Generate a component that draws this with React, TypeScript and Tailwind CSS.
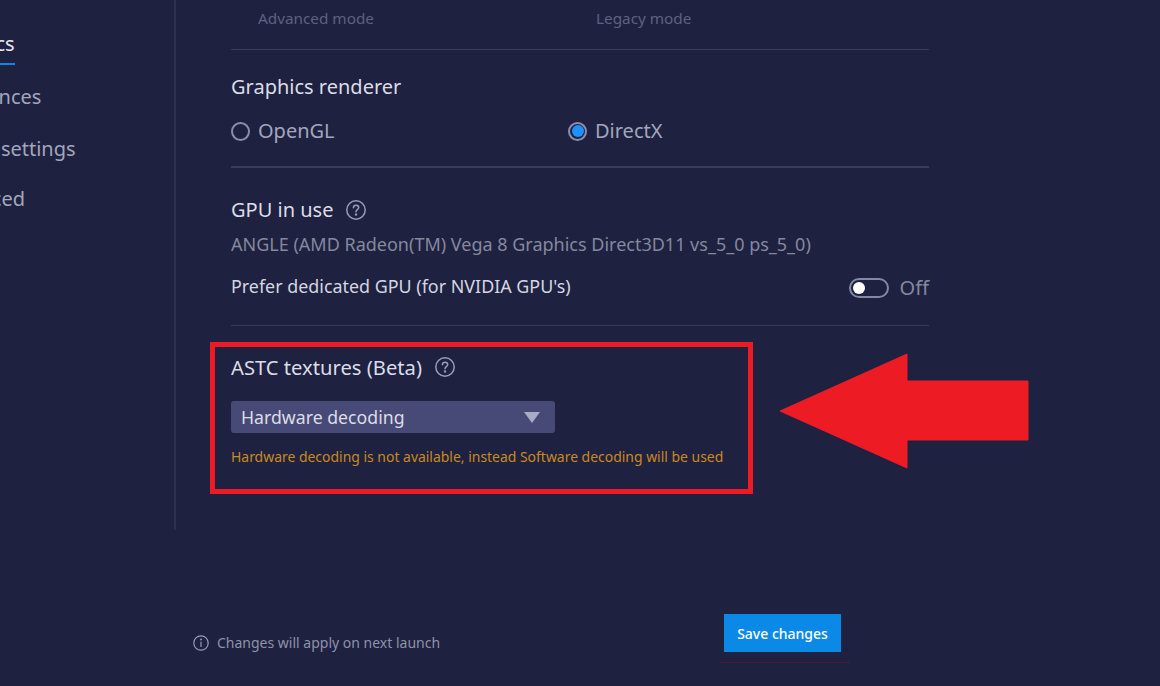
const font = { fontFamily: '"Noto Sans", "Open Sans", sans-serif' };

function HelpIcon() {
  return (
    <svg width="22" height="22" viewBox="0 0 22 22" fill="none" stroke="#9a9db5" strokeWidth="1.5" strokeLinecap="round">
      <circle cx="11" cy="11" r="9.2" />
      <path d="M8.4 8.8c0-1.6 1.2-2.6 2.7-2.6s2.6 1 2.6 2.3c0 2-2.7 2.1-2.7 4.2" />
      <circle cx="11" cy="15.6" r="0.5" fill="#9a9db5" />
    </svg>
  );
}

function Radio({ label, checked }: { label: string; checked?: boolean }) {
  return (
    <div className="flex items-center gap-[8px]">
      <span className="flex h-[19px] w-[19px] items-center justify-center rounded-full border-2 border-[#8c8fa9]">
        {checked && <span className="h-[12px] w-[12px] rounded-full bg-[#1e90ff]" />}
      </span>
      <span className="text-[20px] leading-[24px] text-[#a3a6bd]">{label}</span>
    </div>
  );
}

export default function App() {
  return (
    <div className="relative flex h-[686px] w-[1160px] flex-col overflow-hidden bg-[#1e2140]" style={font}>
      <div className="flex h-[530px]">
        <nav className="flex w-[176px] shrink-0 flex-col overflow-hidden border-r-2 border-[#2c3052] pt-[31px] text-[20px] leading-[26px] text-[#a3a6bd]">
          <div className="ml-[-68px] w-max border-b-2 border-[#0a8ae6] pb-[6px] text-[#e8e9f0]">Graphics</div>
          <div className="ml-[-70px] mt-[19px] whitespace-nowrap">Preferences</div>
          <div className="ml-[-66px] mt-[26px] whitespace-nowrap">Device settings</div>
          <div className="ml-[-67px] mt-[24px] whitespace-nowrap">Advanced</div>
        </nav>

        <main className="ml-[55px] w-[698px]">
          <div className="flex h-[50px] border-b border-[#383b5a] pb-[20px] pl-[27px] pt-[8px] text-[15.3px] leading-[20px] text-[#5f627f]">
            <span className="w-[338px]">Advanced mode</span>
            <span>Legacy mode</span>
          </div>

          <section className="h-[118px] border-b-2 border-[#383b5a] pt-[24px]">
            <h3 className="text-[20px] leading-[26px] text-[#dcdde6]">Graphics renderer</h3>
            <div className="mt-[19px] flex">
              <div className="w-[337px]">
                <Radio label="OpenGL" />
              </div>
              <Radio label="DirectX" checked />
            </div>
          </section>

          <section className="h-[158px] border-b border-[#383b5a] pt-[29px]">
            <div className="flex items-center gap-[12px]">
              <h3 className="text-[20px] leading-[26px] text-[#dcdde6]">GPU in use</h3>
              <HelpIcon />
            </div>
            <p className="mt-[9px] whitespace-nowrap text-[18px] leading-[24px] text-[#85889f]">
              ANGLE (AMD Radeon(TM) Vega 8 Graphics Direct3D11 vs_5_0 ps_5_0)
            </p>
            <div className="mt-[18px] flex items-start justify-between">
              <span className="text-[17.9px] leading-[24px] text-[#d5d6e0]">Prefer dedicated GPU (for NVIDIA GPU's)</span>
              <div className="mt-[2px] flex items-center gap-[11px]">
                <span className="flex h-[20px] w-[40px] items-center rounded-full border-2 border-[#85889f] pl-[2px]">
                  <span className="h-[12px] w-[12px] rounded-full bg-white" />
                </span>
                <span className="text-[20px] leading-[24px] text-[#85889f]">Off</span>
              </div>
            </div>
          </section>

          <section className="pt-[28px]">
            <div className="flex items-center gap-[12px]">
              <h3 className="text-[20.2px] leading-[26px] text-[#dcdde6]">ASTC textures (Beta)</h3>
              <HelpIcon />
            </div>
            <div className="mt-[21px] flex h-[32px] w-[324px] items-center justify-between rounded-[3px] bg-[#474a77] pl-[10px] pr-[15px]">
              <span className="text-[17.7px] leading-[24px] text-[#dcdde6]">Hardware decoding</span>
              <span className="h-0 w-0 border-x-[8px] border-t-[11px] border-x-transparent border-t-[#a9abc4]" />
            </div>
            <p className="mt-[14px] whitespace-nowrap text-[13.95px] leading-[20px] text-[#c98a1e]">
              Hardware decoding is not available, instead Software decoding will be used
            </p>
          </section>
        </main>
      </div>

      <footer className="mt-[84px] flex items-start pl-[193px]">
        <div className="mt-[19px] flex w-[531px] items-center gap-[8px]">
          <svg width="16" height="16" viewBox="0 0 16 16" fill="none" stroke="#9a9db5" strokeWidth="1.2" strokeLinecap="round">
            <circle cx="8" cy="8" r="7.2" />
            <path d="M8 7v4.4" />
            <circle cx="8" cy="4.6" r="0.4" fill="#9a9db5" />
          </svg>
          <span className="text-[14px] leading-[20px] text-[#8f92aa]">Changes will apply on next launch</span>
        </div>
        <button type="button" className="h-[38px] w-[117px] bg-[#0a8ae6] text-[14px] font-medium text-white">
          Save changes
        </button>
      </footer>

      {/* annotation drawn over the screenshot */}
      <div className="absolute left-[210px] top-[342px] h-[152px] w-[543px] border-[5px] border-[#ed1c24]" />
      <svg className="absolute left-[780px] top-[353px]" width="249" height="116" viewBox="0 0 249 116">
        <path d="M0 58 L127 1 V28 H248 V87 H127 V115 Z" fill="#ed1c24" stroke="#ed1c24" strokeLinejoin="round" />
      </svg>
      <div className="absolute left-[720px] top-[662px] h-px w-[130px] bg-[#4a1a3a]" />
    </div>
  );
}
